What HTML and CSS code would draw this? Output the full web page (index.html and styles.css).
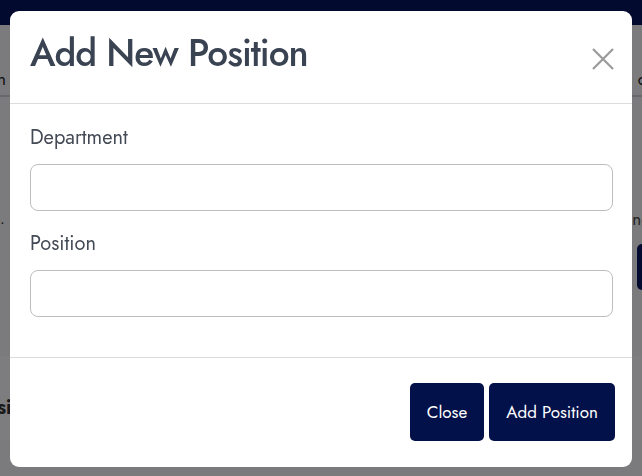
FILE: index.html
```html
<!DOCTYPE html>
<html lang="en">
<head>
<meta charset="utf-8">
<title>Add New Position</title>
<link rel="stylesheet" href="styles.css">
</head>
<body>
<div class="page">
  <div class="navbar"></div>
  <div class="tabs">
    <span class="tab-left">n</span>
    <span class="tab-right">c</span>
  </div>
  <div class="content">
    <div class="content-row">
      <span class="dot">.</span>
      <div class="right-col">
        <span class="frag">ne</span>
        <span class="frag-btn"></span>
      </div>
    </div>
  </div>
  <div class="band">
    <span class="band-text">si</span>
  </div>
</div>
<div class="backdrop"></div>
<div class="modal">
  <div class="dialog">
    <div class="modal-header">
      <h1 class="modal-title">Add New Position</h1>
      <button class="btn-close" type="button" aria-label="Close">
        <svg width="22" height="22" viewBox="0 0 22 22"><path d="M1 1 L21 21 M21 1 L1 21" stroke="#9a9a9a" stroke-width="2.2" fill="none"/></svg>
      </button>
    </div>
    <div class="modal-body">
      <div class="form-group">
        <label class="form-label">Department</label>
        <input class="form-control" type="text">
      </div>
      <div class="form-group">
        <label class="form-label">Position</label>
        <input class="form-control" type="text">
      </div>
    </div>
    <div class="modal-footer">
      <button class="btn" type="button">Close</button>
      <button class="btn" type="button">Add Position</button>
    </div>
  </div>
</div>
</body>
</html>
```
FILE: styles.css
```css
* { box-sizing: border-box; }
html, body { margin: 0; padding: 0; }
body {
  width: 642px;
  height: 476px;
  overflow: hidden;
  background: #f6f6fc;
  font-family: "Jost", "Lato", "Noto Sans", sans-serif;
}
.page { height: 476px; display: flex; flex-direction: column; }
.navbar { height: 25px; background: #05155f; }
.tabs {
  height: 72px;
  border-bottom: 2px solid #d0d0d8;
  display: flex;
  justify-content: space-between;
  align-items: flex-end;
  padding-bottom: 4px;
  font-size: 17px;
  color: #222;
}
.tab-left { margin-left: -3px; }
.tab-right { margin-right: -4px; }
.content { flex: 1; }
.content-row { display: flex; justify-content: space-between; padding-top: 110px; }
.dot { color: #333; font-size: 16px; }
.right-col { display: flex; flex-direction: column; align-items: flex-end; }
.frag { font-size: 17px; color: #444; margin-right: -8px; }
.frag-btn { width: 5px; height: 46px; margin-top: 13px; background: #05155f; border-radius: 6px 0 0 6px; }
.band {
  height: 84px;
  margin-bottom: 36px;
  background: #fbfbff;
  display: flex;
  align-items: center;
  padding-top: 18px;
  font-size: 20px;
  font-weight: 700;
  color: #333;
}
.band-text { margin-left: -3px; }
.backdrop {
  position: fixed;
  inset: 0;
  background: rgba(0, 0, 0, 0.5);
}
.modal {
  position: fixed;
  inset: 0;
  padding: 11px 10px 0 10px;
}
.dialog {
  width: 622px;
  background: #fff;
  border-radius: 9px;
  overflow: hidden;
  display: flex;
  flex-direction: column;
}
.modal-header {
  display: flex;
  align-items: center;
  justify-content: space-between;
  padding: 16px 18px 16px 20px;
  border-bottom: 1px solid #dcdcdc;
}
.modal-title {
  margin: 0;
  font-size: 37px;
  letter-spacing: -1px;
  line-height: 52px;
  padding-bottom: 8px;
  font-weight: 500;
  color: #3a4352;
}
.btn-close {
  border: 0;
  background: none;
  padding: 0;
  width: 22px;
  height: 22px;
  margin-top: 3px;
  display: flex;
}
.modal-body { padding: 20px 19px 21px 20px; }
.form-group { display: flex; flex-direction: column; margin-bottom: 19px; }
.form-label {
  font-size: 20px;
  line-height: 27px;
  color: #434a55;
  margin-bottom: 13px;
}
.form-control {
  height: 47px;
  width: 100%;
  border: 1px solid #bdbdbd;
  border-radius: 8px;
  background: #fff;
  font-family: inherit;
  font-size: 16px;
}
.modal-footer {
  display: flex;
  justify-content: flex-end;
  gap: 5px;
  padding: 25px 17px 26px 20px;
  border-top: 1px solid #dcdcdc;
}
.btn {
  height: 58px;
  padding: 0 17px;
  border: 0;
  border-radius: 5px;
  background: #03114a;
  color: #fff;
  font-family: inherit;
  font-size: 17px;
}
```
